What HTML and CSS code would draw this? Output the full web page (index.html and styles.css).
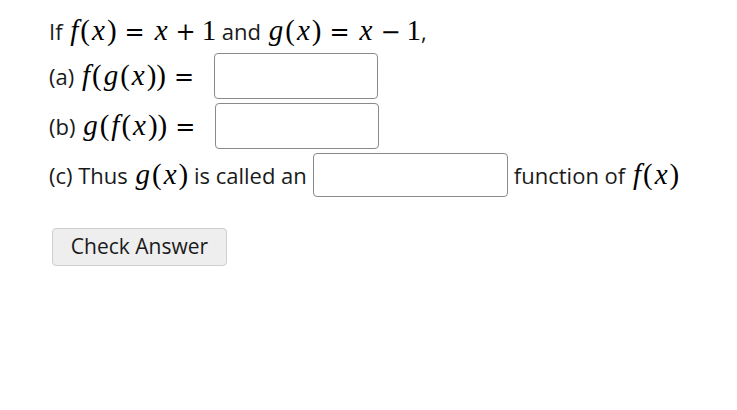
FILE: index.html
```html
<!DOCTYPE html>
<html>
<head>
<meta charset="utf-8">
<link rel="stylesheet" href="styles.css">
</head>
<body>
<div class="page">
  <div class="row intro"><span class="seg">If <span class="m"><i>f</i>(<i>x</i>)<span class="rel">=</span><i>x</i><span class="bin">+</span>1</span> and <span class="m"><i>g</i>(<i>x</i>)<span class="rel">=</span><i>x</i><span class="bin">−</span>1</span>,</span></div>
  <div class="row q"><span class="seg">(a) <span class="m"><i>f</i>(<i>g</i>(<i>x</i>))<span class="rel">=</span></span></span><span class="box box-ab"></span></div>
  <div class="row q"><span class="seg">(b) <span class="m"><i>g</i>(<i>f</i>(<i>x</i>))<span class="rel">=</span></span></span><span class="box box-ab"></span></div>
  <div class="row q"><span class="seg">(c) Thus <span class="m"><i>g</i>(<i>x</i>)</span> is called an</span><span class="box box-c"></span><span class="seg">function of <span class="m"><i>f</i>(<i>x</i>)</span></span></div>
  <div class="actions"><button class="btn">Check Answer</button></div>
</div>
</body>
</html>
```
FILE: styles.css
```css
html, body { margin: 0; padding: 0; background: #fff; }
.page {
  padding: 12px 0 0 49px;
  font-family: "Open Sans", sans-serif;
  font-size: 22px;
  color: #1a1a1a;
}
.row {
  display: flex;
  align-items: center;
  white-space: nowrap;
}
.seg { display: inline-block; white-space: pre; line-height: 30px; }
.intro { height: 38px; margin-bottom: 3px; }
.q { margin-bottom: 4px; }
.m {
  font-family: "Liberation Serif", "Times New Roman", serif;
  font-size: 29px;
  line-height: 1;
  color: #000;
  white-space: nowrap;
}
.m i { font-style: italic; padding: 0 2px 0 2px; }
.rel, .bin {
  font-family: "DejaVu Serif", serif;
  font-size: 24px;
}
.rel { margin: 0 8px; }
.bin { margin: 0 6px; }
.box {
  display: inline-block;
  box-sizing: border-box;
  border: 1px solid #8a8a8a;
  border-radius: 4px;
  background: #fff;
}
.box-ab { width: 164px; height: 46px; margin-left: 12px; }
.box-c { width: 195px; height: 44px; margin: 0 6px; }
.actions { padding-top: 27px; }
.btn {
  margin-left: 3px;
  width: 175px;
  height: 38px;
  background: #eeeeee;
  border: 1px solid #cfcfcf;
  border-radius: 4px;
  font-family: "Open Sans", sans-serif;
  font-size: 21px;
  color: #1a1a1a;
  padding: 0 0 2px;
}
```
